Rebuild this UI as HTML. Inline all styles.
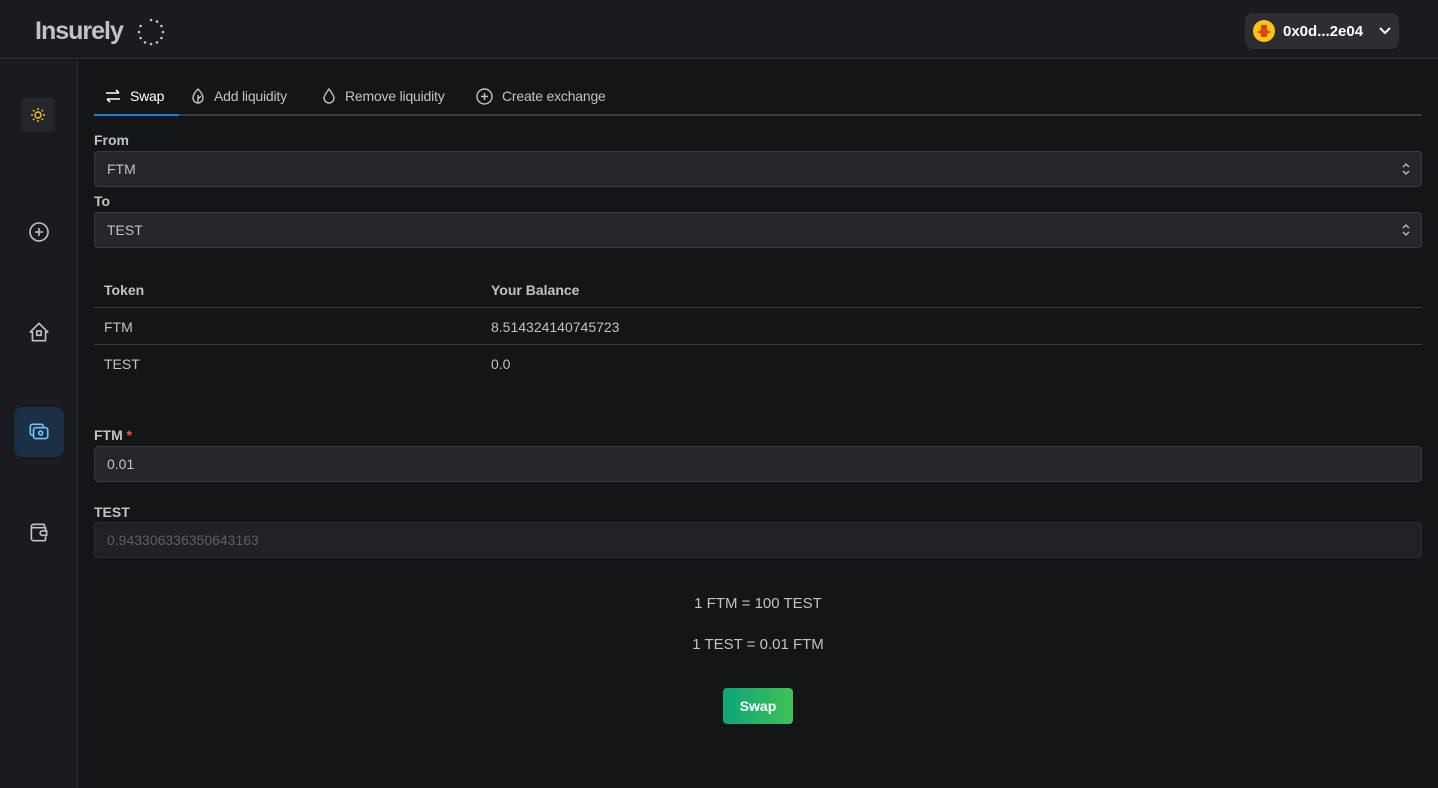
<!DOCTYPE html>
<html><head><style>
*{box-sizing:border-box;margin:0;padding:0}
body{width:1438px;height:788px;background:#141517;font-family:"Liberation Sans",sans-serif;color:#c1c2c5;position:relative;overflow:hidden;font-size:14px}
.hdr{position:absolute;left:0;top:0;width:1438px;height:59px;background:#1a1b1e;border-bottom:1px solid #2c2e33}
.logo{position:absolute;left:35px;top:17px;font-size:25px;font-weight:bold;color:#c1c2c5;letter-spacing:-1px}
.acct{position:absolute;left:1245px;top:13px;width:154px;height:36px;background:#2c2e33;border-radius:8px}
.acct .av{position:absolute;left:8px;top:7px;width:22px;height:22px;border-radius:50%;background:#fcc419}
.acct span{position:absolute;left:38px;top:10px;font-weight:bold;font-size:15px;color:#fff}
.side{position:absolute;left:0;top:60px;width:78px;height:728px;background:#1a1b1e;border-right:1px solid #2c2e33}
.ico{position:absolute;left:14px;width:50px;height:50px;border-radius:8px;display:flex;align-items:center;justify-content:center}
.tabs{position:absolute;left:94px;top:76px;width:1328px;height:40px;border-bottom:2px solid #373a40}
.tab{position:absolute;top:0;height:40px;display:flex;align-items:center;gap:9px;font-size:14px;color:#c1c2c5;letter-spacing:-0.2px}
.lbl{position:absolute;left:94px;font-size:14px;font-weight:bold;color:#c1c2c5}
.inp{position:absolute;left:94px;width:1328px;height:36px;background:#25262b;border:1px solid #373a40;border-radius:4px;padding-left:12px;line-height:34px;font-size:14px;color:#c1c2c5}
.row{position:absolute;left:94px;width:1328px;border-bottom:1px solid #373a40;height:37px}
.row span{position:absolute;top:11px;font-size:14px}
.c{position:absolute;left:0;width:1438px;padding-left:78px;text-align:center;font-size:15px;color:#c1c2c5}
.btn{position:absolute;left:723px;top:688px;width:70px;height:36px;border-radius:4px;background:linear-gradient(90deg,#0ca678,#40c057);color:#fff;font-weight:bold;font-size:14px;text-align:center;line-height:36px}
</style></head><body>
<div class="hdr">
<div class="logo">Insurely</div>
<svg style="position:absolute;left:136px;top:17px" width="30" height="30" viewBox="0 0 30 30"><g fill="#c1c2c5"><circle cx="15" cy="3" r="1.3"/><circle cx="21" cy="4.6" r="1.3"/><circle cx="25.4" cy="9" r="1.3"/><circle cx="27" cy="15" r="1.3"/><circle cx="25.4" cy="21" r="1.3"/><circle cx="21" cy="25.4" r="1.3"/><circle cx="15" cy="27" r="1.3"/><circle cx="9" cy="25.4" r="1.3"/><circle cx="4.6" cy="21" r="1.3"/><circle cx="3" cy="15" r="1.3"/><circle cx="4.6" cy="9" r="1.3"/></g></svg>
<div class="acct"><div class="av"><svg width="22" height="22" viewBox="0 0 22 22"><path d="M8 5h6v5l4 2-4 2v3H8v-3l-4-2 4-2z" fill="#d9480f"/></svg></div><span>0x0d...2e04</span>
<svg style="position:absolute;left:134px;top:14px" width="12" height="8" viewBox="0 0 12 8"><path d="M1 1l5 5 5-5" stroke="#fff" stroke-width="2" fill="none"/></svg></div>
</div>
<div class="side">
<div class="ico" style="top:38px;left:21px;width:34px;height:34px;background:#25262b;border-radius:4px"><svg width="16" height="16" viewBox="0 0 16 16" stroke="#fcc419" stroke-width="1.4" fill="none"><circle cx="8" cy="8" r="3"/><path d="M8 1v2M8 13v2M1 8h2M13 8h2M3 3l1.4 1.4M11.6 11.6L13 13M3 13l1.4-1.4M11.6 4.4L13 3"/></svg></div>
<div class="ico" style="top:147px"><svg width="22" height="22" viewBox="0 0 22 22" stroke="#c1c2c5" stroke-width="1.6" fill="none"><circle cx="11" cy="11" r="9"/><path d="M11 7v8M7 11h8"/></svg></div>
<div class="ico" style="top:247px"><svg width="24" height="24" viewBox="0 0 22 22" stroke="#c1c2c5" stroke-width="1.5" fill="none" stroke-linejoin="round"><path d="M3 11l8-8 8 8h-2v8H5v-8z"/><rect x="9" y="10" width="4" height="4"/></svg></div>
<div class="ico" style="top:347px;background:#1b3045"><svg width="24" height="24" viewBox="0 0 22 22" stroke="#74c0fc" stroke-width="1.5" fill="none"><rect x="6" y="7" width="13" height="10" rx="2"/><path d="M15 7V6a2 2 0 0 0-2-2H5a2 2 0 0 0-2 2v6a2 2 0 0 0 2 2h1"/><circle cx="12.5" cy="12" r="1.8"/></svg></div>
<div class="ico" style="top:447px"><svg width="24" height="24" viewBox="0 0 22 22" stroke="#c1c2c5" stroke-width="1.5" fill="none"><path d="M16 7V5a1 1 0 0 0-1-1H6a2 2 0 0 0-2 2v11a2 2 0 0 0 2 2h10a1 1 0 0 0 1-1v-3"/><path d="M4 7h13v3"/><path d="M18 10v4h-4a2 2 0 0 1 0-4z"/></svg></div>
</div>
<div class="tabs">
<div style="position:absolute;left:0;bottom:-2px;width:85px;height:2px;background:#1c7ed6"></div>
<div class="tab" style="left:11px;color:#fff"><svg width="16" height="14" viewBox="0 0 16 14" stroke="#fff" stroke-width="1.6" fill="none"><path d="M1 4h13M11 1l3 3M15 10H2M5 13l-3-3"/></svg>Swap</div>
<div class="tab" style="left:97px"><svg width="14" height="16" viewBox="0 0 14 16" stroke="#c1c2c5" stroke-width="1.4" fill="none"><path d="M7 1C3 5 2 8 2 10a5 5 0 0 0 10 0c0-2-1-5-5-9zM7 15V7M7 11l3-3"/></svg>Add liquidity</div>
<div class="tab" style="left:228px"><svg width="14" height="16" viewBox="0 0 14 16" stroke="#c1c2c5" stroke-width="1.4" fill="none"><path d="M7 1C4 5 2 8 2 10a5 5 0 0 0 10 0c0-2-2-5-5-9z"/></svg>Remove liquidity</div>
<div class="tab" style="left:382px"><svg width="17" height="17" viewBox="0 0 17 17" stroke="#c1c2c5" stroke-width="1.4" fill="none"><circle cx="8.5" cy="8.5" r="7.5"/><path d="M8.5 5v7M5 8.5h7"/></svg>Create exchange</div>
</div>
<div class="lbl" style="top:132px">From</div>
<div class="inp" style="top:151px">FTM</div>
<div class="lbl" style="top:193px">To</div>
<div class="inp" style="top:212px">TEST</div>
<svg style="position:absolute;left:1402px;top:163px" width="8" height="12" viewBox="0 0 8 12" stroke="#c1c2c5" stroke-width="1.3" fill="none"><path d="M1 4l3-3 3 3M1 8l3 3 3-3"/></svg>
<svg style="position:absolute;left:1402px;top:224px" width="8" height="12" viewBox="0 0 8 12" stroke="#c1c2c5" stroke-width="1.3" fill="none"><path d="M1 4l3-3 3 3M1 8l3 3 3-3"/></svg>
<div class="row" style="top:271px"><span style="left:10px;font-weight:bold">Token</span><span style="left:397px;font-weight:bold">Your Balance</span></div>
<div class="row" style="top:308px"><span style="left:10px">FTM</span><span style="left:397px">8.514324140745723</span></div>
<div class="row" style="top:345px;border:none"><span style="left:10px">TEST</span><span style="left:397px">0.0</span></div>
<div class="lbl" style="top:427px">FTM <span style="color:#fa5252">*</span></div>
<div class="inp" style="top:446px">0.01</div>
<div class="lbl" style="top:504px">TEST</div>
<div class="inp" style="top:522px;color:#5c5f66;background:#202125;border-color:#2c2e33">0.943306336350643163</div>
<div class="c" style="top:595px">1 FTM = 100 TEST</div>
<div class="c" style="top:636px">1 TEST = 0.01 FTM</div>
<div class="btn">Swap</div>
</body></html>
